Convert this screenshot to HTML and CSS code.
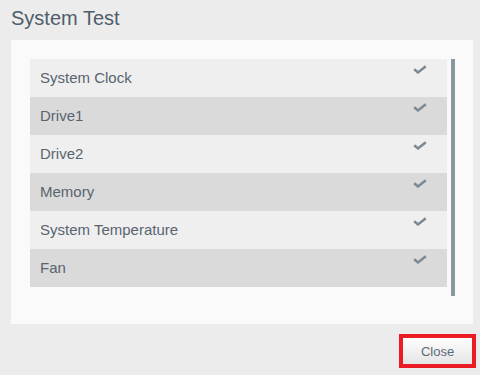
FILE: index.html
```html
<!DOCTYPE html>
<html>
<head>
<meta charset="utf-8">
<link rel="stylesheet" href="styles.css">
</head>
<body>
<div class="dialog">
  <h1 class="title">System Test</h1>
  <div class="panel">
    <ul class="list">
      <li class="row"><span class="label">System Clock</span><svg class="check" width="14" height="9" viewBox="0 0 14 9"><path d="M1.2 4.2 L5 7.4 L12.8 1.2" fill="none" stroke="#7b8a95" stroke-width="2.6"/></svg></li>
      <li class="row"><span class="label">Drive1</span><svg class="check" width="14" height="9" viewBox="0 0 14 9"><path d="M1.2 4.2 L5 7.4 L12.8 1.2" fill="none" stroke="#7b8a95" stroke-width="2.6"/></svg></li>
      <li class="row"><span class="label">Drive2</span><svg class="check" width="14" height="9" viewBox="0 0 14 9"><path d="M1.2 4.2 L5 7.4 L12.8 1.2" fill="none" stroke="#7b8a95" stroke-width="2.6"/></svg></li>
      <li class="row"><span class="label">Memory</span><svg class="check" width="14" height="9" viewBox="0 0 14 9"><path d="M1.2 4.2 L5 7.4 L12.8 1.2" fill="none" stroke="#7b8a95" stroke-width="2.6"/></svg></li>
      <li class="row"><span class="label">System Temperature</span><svg class="check" width="14" height="9" viewBox="0 0 14 9"><path d="M1.2 4.2 L5 7.4 L12.8 1.2" fill="none" stroke="#7b8a95" stroke-width="2.6"/></svg></li>
      <li class="row"><span class="label">Fan</span><svg class="check" width="14" height="9" viewBox="0 0 14 9"><path d="M1.2 4.2 L5 7.4 L12.8 1.2" fill="none" stroke="#7b8a95" stroke-width="2.6"/></svg></li>
    </ul>
    <div class="scrollbar"></div>
  </div>
  <div class="footer">
    <div class="btn-frame"><button class="btn">Close</button></div>
  </div>
</div>
</body>
</html>
```
FILE: styles.css
```css
html, body {
  margin: 0;
  padding: 0;
}
body {
  width: 480px;
  height: 375px;
  background: #ececec;
  font-family: "Liberation Sans", Arial, sans-serif;
  overflow: hidden;
}
.dialog {
  display: flex;
  flex-direction: column;
}
.title {
  margin: 0;
  height: 33px;
  padding: 7px 0 0 11px;
  font-size: 20px;
  line-height: 23px;
  font-weight: normal;
  color: #4e5d6b;
}
.panel {
  margin: 0 7px 0 11px;
  height: 265px;
  padding: 19px 0 0 19px;
  background: #fafafa;
  display: flex;
  align-items: flex-start;
}
.list {
  list-style: none;
  margin: 0;
  padding: 0;
  width: 417px;
}
.row {
  height: 38px;
  box-sizing: border-box;
  display: flex;
  justify-content: space-between;
  align-items: center;
  padding: 0 0 2px 10px;
  background: #efefef;
}
.row:nth-child(even) {
  background: #dadada;
}
.label {
  font-size: 15px;
  color: #59646f;
}
.check {
  align-self: flex-start;
  margin-top: 6px;
  margin-right: 20px;
}
.scrollbar {
  width: 4px;
  height: 237px;
  margin-left: 4px;
  background: #8a98a2;
}
.footer {
  display: flex;
  justify-content: flex-end;
  padding: 10px 4px 0 0;
}
.btn-frame {
  border: 4px solid #ec1c24;
  display: flex;
}
.btn {
  width: 69px;
  height: 26px;
  margin: 0;
  padding: 0;
  border: none;
  background: linear-gradient(#fdfdfd, #e5e5e5);
  font-family: "Liberation Sans", Arial, sans-serif;
  font-size: 13px;
  color: #5a6a79;
}
```
